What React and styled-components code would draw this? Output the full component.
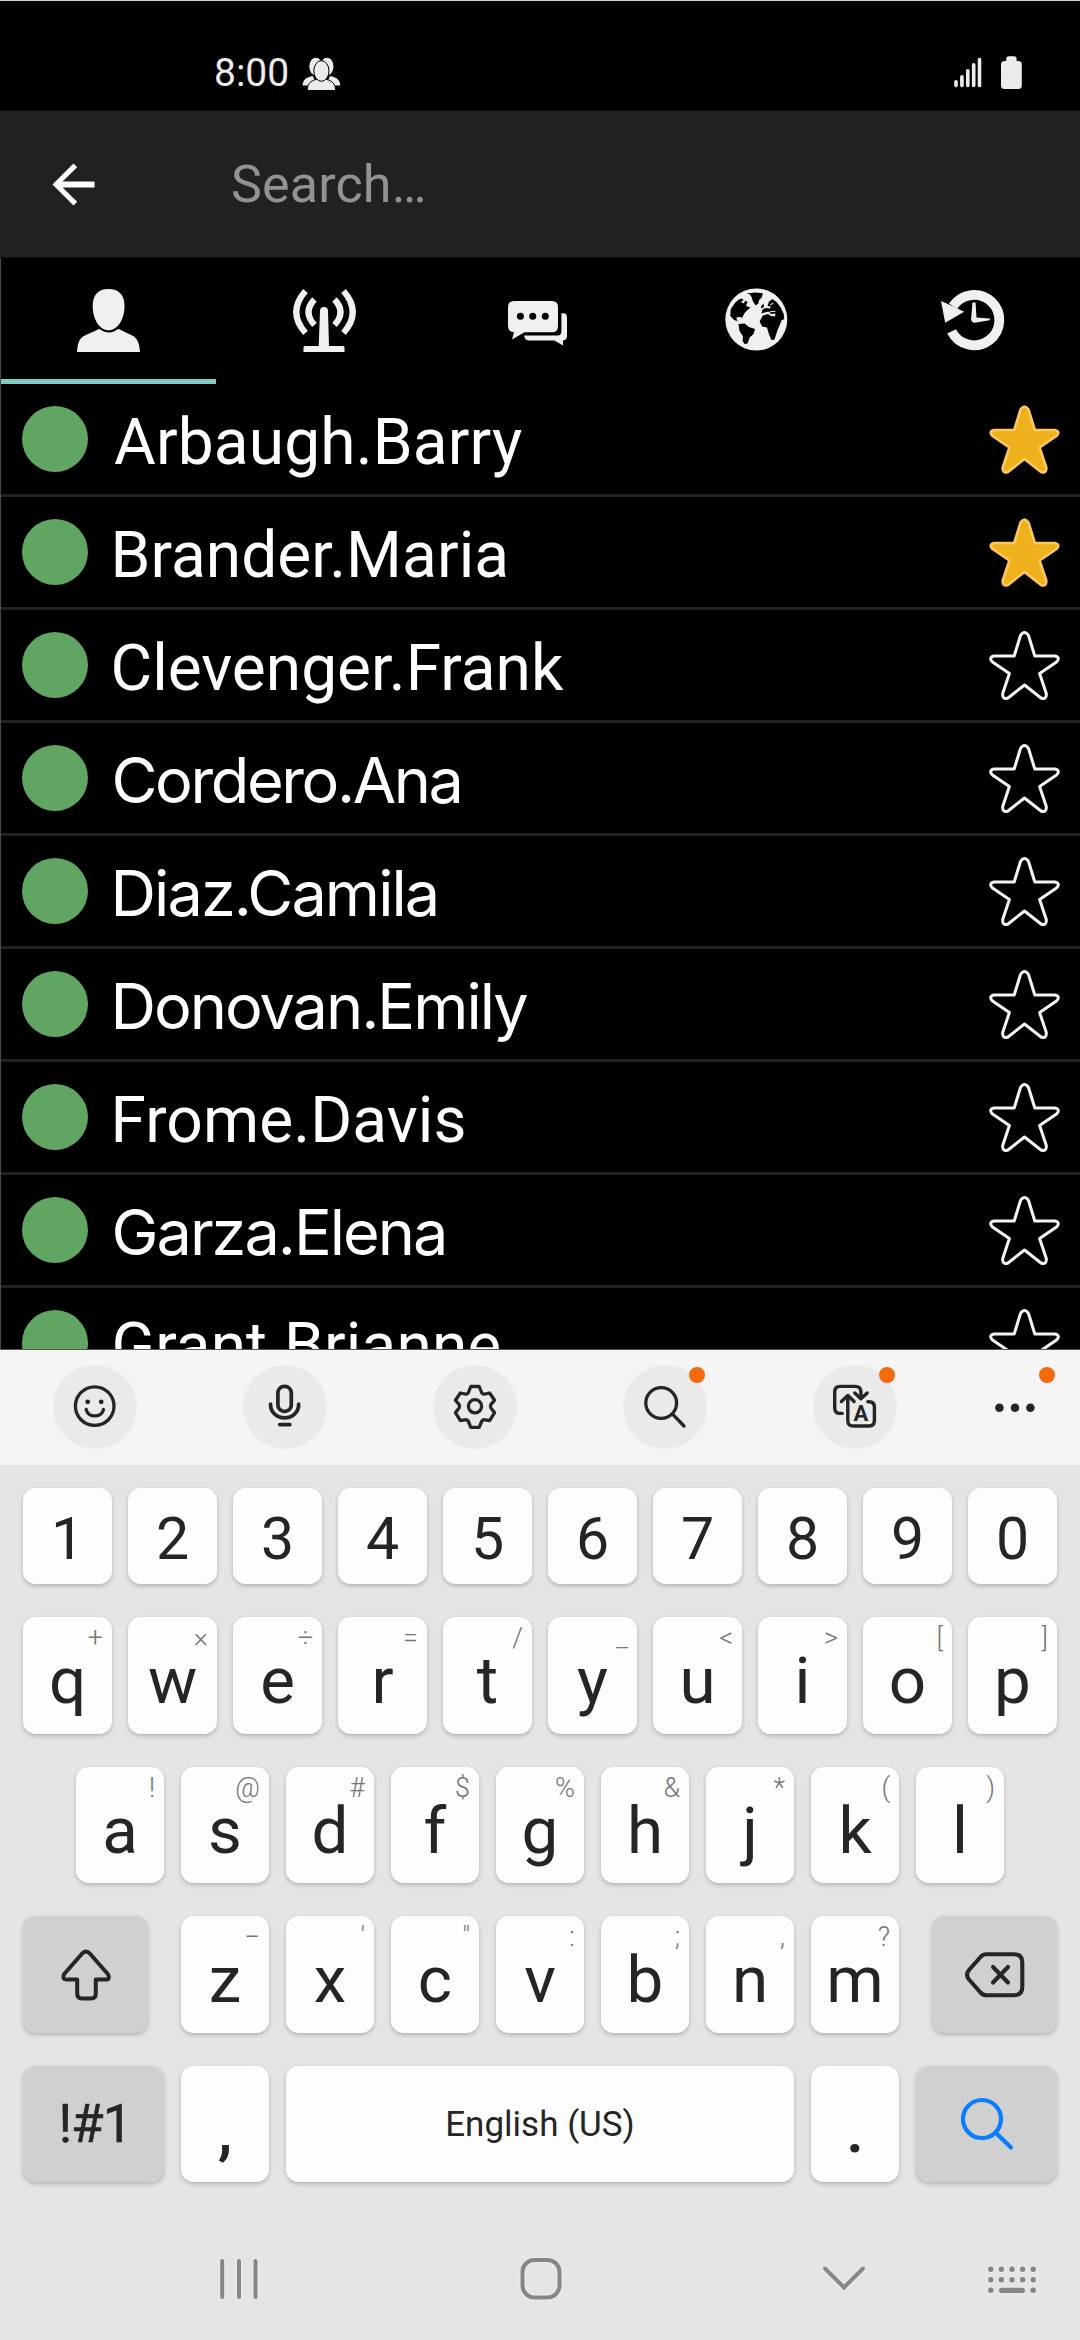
import styled, { createGlobalStyle, css } from "styled-components";

const GlobalStyle = createGlobalStyle`
  * {
    box-sizing: border-box;
  }

  body {
    margin: 0;
    background: #000;
    font-family: Roboto, "Liberation Sans", sans-serif;
  }

  svg {
    display: block;
    flex: none;
    overflow: visible;
  }
`;

const Screen = styled.div`
  width: 1080px;
  height: 2340px;
  display: flex;
  flex-direction: column;
  overflow: hidden;
  background: #000;
`;

const StatusBar = styled.div`
  height: 110px;
  display: flex;
  align-items: flex-start;
  padding: 50px 58px 0 214px;
  border-top: 1px solid #cfd1d0;
  color: #ebebeb;
`;

const Clock = styled.span`
  font-size: 39px;
  line-height: 44px;
  margin-right: 12.5px;
`;

const StatusIcons = styled.div`
  display: flex;
  gap: 19px;
  margin-left: auto;
  padding-top: 5px;
`;

const StatusGroup = styled.div`
  padding-top: 6px;
`;

const AppBar = styled.header`
  height: 148px;
  display: flex;
  align-items: center;
  padding: 0 42px;
  background: #212121;
  border-top: 1px solid #111;
  border-bottom: 1px solid #111;
`;

const SearchHint = styled.div`
  margin-left: 126px;
  padding-top: 2px;
  font-size: 52px;
  line-height: 60px;
  letter-spacing: 0.15px;
  color: #929292;
`;

const Body = styled.div`
  height: 1092px;
  overflow: hidden;
  border-left: 1px solid #4a4a4a;
  border-bottom: 1px solid #555;
`;

const Tabs = styled.nav`
  height: 126px;
  display: grid;
  grid-template-columns: repeat(5, 216px);
  margin-left: -1px;
`;

const Tab = styled.div`
  display: flex;
  align-items: center;
  justify-content: center;
  padding-top: ${({ $drop }) => $drop || 3}px;
  color: #f1eff0;
  border-bottom: 5px solid ${({ $active }) => ($active ? "#80cbc4" : "transparent")};
`;

const ContactRow = styled.div`
  height: 113px;
  display: flex;
  align-items: center;
  padding: 0 20.5px 0 21px;
  border-bottom: 3px solid #212121;
`;

const Presence = styled.span`
  width: 66px;
  height: 66px;
  border-radius: 50%;
  background: #60a561;
`;

const Name = styled.span`
  margin-right: auto;
  padding-top: 7px;
  padding-left: ${({ $indent }) => $indent}px;
  font-size: 64px;
  line-height: 102px;
  color: #fff;
  white-space: nowrap;
  letter-spacing: ${({ $spacing }) => $spacing || 0}px;

  ${({ $wide }) =>
    $wide &&
    css`
      padding-top: 3px;
      font-family: Inter, Roboto, sans-serif;
      font-size: 63px;
    `}
`;

const Toolbar = styled.div`
  height: 115px;
  display: flex;
  padding: 15px 23px 0 53px;
  gap: 106px;
  background: #f5f5f5;
`;

const ToolButton = styled.div`
  position: relative;
  width: 84px;
  height: 84px;
  display: flex;
  align-items: center;
  justify-content: center;
  border-radius: 50%;
  background: ${({ $plain }) => ($plain ? "transparent" : "#eaeaea")};
  margin-left: ${({ $plain }) => ($plain ? "-30px" : "0")};
  color: #252525;
`;

const Badge = styled.span`
  position: absolute;
  top: 1.5px;
  right: 2px;
  width: 16px;
  height: 16px;
  border-radius: 50%;
  background: #f66a0b;
`;

const Keyboard = styled.div`
  height: 753px;
  display: flex;
  flex-direction: column;
  gap: 33px;
  padding: 23px 23px 0;
  background: #e5e5e5;
`;

const KeyRow = styled.div`
  display: flex;
  justify-content: space-between;
  height: ${({ $height }) => $height}px;
  padding: 0 ${({ $inset }) => $inset || 0}px;
`;

const LetterGroup = styled.div`
  display: flex;
  gap: 17px;
`;

const Key = styled.div`
  width: ${({ $width }) => $width || 88}px;
  display: flex;
  flex-direction: column;
  align-items: center;
  justify-content: ${({ $center }) => ($center ? "center" : "flex-start")};
  border-radius: 12.5px;
  background: ${({ $dark }) => ($dark ? "#d0d0d0" : "#fdfdfd")};
  box-shadow: 0 2px 4px rgba(0, 0, 0, 0.22);
  color: #252525;
`;

const Digit = styled.span`
  padding-top: 5px;
  font-size: 59px;
  line-height: 60px;
`;

const KeyHint = styled.span`
  align-self: flex-end;
  height: 30px;
  margin-top: 7px;
  padding-right: 9px;
  font-size: 27px;
  font-weight: 300;
  line-height: 29px;
  color: #757575;
`;

const Letter = styled.span`
  font-size: 65.5px;
  font-weight: ${({ $heavy }) => ($heavy ? 500 : 400)};
  line-height: 54px;
`;

const SymbolLabel = styled.span`
  padding-left: 3px;
  font-size: 53px;
  line-height: 60px;
  letter-spacing: -1px;
  -webkit-text-stroke: 0.5px currentColor;
`;

const SpaceLabel = styled.span`
  padding-top: 2px;
  font-size: 35px;
  line-height: 40px;
`;

const NavBar = styled.footer`
  height: 122px;
  display: flex;
  align-items: center;
  padding-left: 219px;
  background: #e5e5e5;
  color: #868686;
`;

const NavItem = styled.div`
  margin-right: ${({ $gap }) => $gap || 0}px;
  filter: drop-shadow(0 0 1px rgba(255, 255, 255, 0.6));
`;

const contacts = [
  { name: "Arbaugh.Barry", favorite: true, indent: 26, spacing: 0.15 },
  { name: "Brander.Maria", favorite: true, indent: 22.5, spacing: 0.05 },
  { name: "Clevenger.Frank", indent: 22.5 },
  { name: "Cordero.Ana", indent: 23.5, spacing: -2.4, wide: true },
  { name: "Diaz.Camila", indent: 22.5, spacing: -1.9, wide: true },
  { name: "Donovan.Emily", indent: 22.5, spacing: -2, wide: true },
  { name: "Frome.Davis", indent: 22.5, spacing: 0.1 },
  { name: "Garza.Elena", indent: 23.5, spacing: -2, wide: true },
  { name: "Grant.Brianne", indent: 23.5, spacing: 0.1 },
];

const digits = ["1", "2", "3", "4", "5", "6", "7", "8", "9", "0"];

const topRow = [
  ["q", "+"],
  ["w", "×"],
  ["e", "÷"],
  ["r", "="],
  ["t", "/"],
  ["y", "_"],
  ["u", "<"],
  ["i", ">"],
  ["o", "["],
  ["p", "]"],
];

const homeRow = [
  ["a", "!"],
  ["s", "@"],
  ["d", "#"],
  ["f", "$"],
  ["g", "%"],
  ["h", "&"],
  ["j", "*"],
  ["k", "("],
  ["l", ")"],
];

const bottomRow = [
  ["z", "−"],
  ["x", "'"],
  ["c", '"'],
  ["v", ":"],
  ["b", ";"],
  ["n", ","],
  ["m", "?"],
];

const GroupIcon = () => (
  <svg width="39" height="34" viewBox="0 0 39 34" fill="currentColor" stroke="#000" strokeWidth="1">
    <ellipse cx="13.8" cy="9.5" rx="7" ry="9.3" />
    <ellipse cx="25" cy="9.5" rx="7" ry="9.3" />
    <path d="M0 29C0 23 4 19.5 11 18.5L16 29Z" />
    <path d="M38.8 29C38.8 23 34.8 19.5 27.8 18.5L22.8 29Z" />
    <path d="M5.2 33.5C5.5 26.5 8.5 24 14.5 22.3H24.3C30.3 24 33.3 26.5 33.6 33.5Z" />
    <ellipse cx="19.4" cy="14" rx="7.6" ry="10.3" />
  </svg>
);

const SignalIcon = () => (
  <svg width="28" height="32" viewBox="0 0 28 32" stroke="currentColor" strokeWidth="3.6" strokeLinecap="round">
    <path d="M2 25.8V29.5M7.9 20.8V29.5M13.8 14.8V29.5M19.7 8.8V29.5M25.5 3.5V29.5" />
  </svg>
);

const BatteryIcon = () => (
  <svg width="21" height="33" viewBox="0 0 21 33" fill="currentColor">
    <rect x="5.2" y="0.3" width="10.4" height="10" rx="2.5" />
    <rect x="0" y="5" width="20.8" height="28" rx="3.5" />
  </svg>
);

const BackIcon = () => (
  <svg width="63" height="63" viewBox="0 0 24 24" fill="#fff">
    <path d="M20 10.9H7.83l5.59-5.49L12 4l-8 8 8 8 1.41-1.41L7.83 13.1H20z" />
  </svg>
);

const PersonIcon = () => (
  <svg width="63" height="63" viewBox="0 0 63 63" fill="currentColor">
    <path d="M31.5 0C42 0 47.5 6 47.5 17C47.5 31 40 41.3 31.5 41.3C23 41.3 15.7 31 15.7 17C15.7 6 21 0 31.5 0Z" />
    <path d="M0 63C.5 55 2 50.5 6 47.5C11 44.5 18 42.5 21.5 40L23.5 40.5C28 44.5 36 44.5 40 40.5L42 40C47 43 53 45 57 47.5C61.5 51 62.5 57 63 63Z" />
  </svg>
);

const AntennaIcon = () => (
  <svg width="63" height="63" viewBox="0 0 63 63" fill="none" stroke="currentColor" strokeWidth="6.2">
    <path d="M12.5 2Q-6 23 12.5 44M21.5 10.5Q9.5 23 21.5 36" />
    <path d="M50.5 2Q69 23 50.5 44M41.5 10.5Q53.5 23 41.5 36" />
    <path
      d="M25.7 57L27 22Q27 18 31 18Q35 18 35 22L36 57H50Q51.5 57 51.5 58.5V63H10.5V58.5Q10.5 57 12 57Z"
      fill="currentColor"
      stroke="none"
    />
  </svg>
);

const ChatIcon = () => (
  <svg width="64" height="46" viewBox="0 0 64 46" fill="currentColor">
    <path d="M6 0H44Q50 0 50 6V25Q50 31.3 44 31.3H16.5L4 38.5L6 31.3Q0 31 0 25V6Q0 0 6 0Z" />
    <path d="M53.4 12.3H55.5Q59 12.5 59 16.5V35Q59 39 55 39.5V44.5L46.5 39.5H21Q17 39.5 16 34.5H49.5Q53.4 34.5 53.4 30.5Z" />
    <g fill="#000">
      <circle cx="12.4" cy="15.2" r="3.5" />
      <circle cx="24.7" cy="15.2" r="3.5" />
      <circle cx="37.3" cy="15.2" r="3.5" />
    </g>
  </svg>
);

const GlobeIcon = () => (
  <svg width="63" height="62" viewBox="0 0 63 62">
    <circle cx="31.3" cy="30.5" r="31" fill="currentColor" />
    <g fill="#000">
      <path d="M21.7 4.5L30 3.4L37.8 4.2L36.8 8.5L34 11L33.4 14.5L30.5 16.5L27.8 12L26.5 8L25 5.5Z" />
      <path d="M17 9.5L18.5 11L16 13L18.5 14.5L20.5 11.5L22.5 13L21 17L25.5 18.5L22 21.5L19.6 24L17 29L15.5 28L11.4 28.3L12 31.5L15 33L9 31L5.2 26.7L5.8 20L10.5 13.3L14 10.5Z" />
      <path d="M13.4 35L19.6 34.5L24 38L30 40L28.6 45L24.8 48.3L22.5 54.5L19.5 55L17.6 52L18 47.5L14.5 42Z" />
      <path d="M47.5 10L52 13.5L56 19L58.7 25L59.2 30L56.5 31.5L54.8 36L52.3 41.7L49.5 50.5L46.5 51L44.2 46L42 38.5L37.2 37.5L34.6 32.5L37.8 26.5L43 25L46 27L50 27.5L50.5 24.5L46 25L44 22.5L39.5 23.5L36.5 24.5L37.5 20.5L41 19L45 19.5L46 17.5L42.5 17L44 12.5Z" />
      <path d="M36 17.5L38.5 14.5L39 18L36.5 19.5Z" />
    </g>
    <path d="M45 15.5L48.5 14.5M45 22.8L50.5 22.2" stroke="currentColor" strokeWidth="1" />
  </svg>
);

const HistoryIcon = () => (
  <svg width="63" height="60" viewBox="0 0 63 60" fill="none" stroke="currentColor">
    <path d="M10.6 41.4A25.2 25.2 0 1 0 12 16.3" strokeWidth="9.8" />
    <path d="M0 11L9 15L23.2 21.8L4.2 32.8Z" fill="currentColor" stroke="none" />
    <path d="M31.4 12.5H34.6L35.5 27.5L48.8 28.6V30.2L35 32.5A3.8 3.8 0 0 1 30.3 27.5Z" fill="currentColor" stroke="none" />
  </svg>
);

const StarIcon = ({ filled }) => (
  <svg
    width="71"
    height="69"
    viewBox="0 0 71 69"
    fill={filled ? "#eeb11e" : "none"}
    stroke={filled ? "#fcc75f" : "#f4f4f4"}
    strokeWidth={filled ? 2.6 : 3}
    strokeLinejoin="round"
  >
    <path d="M31.5 4.5Q35.5 -1.5 39.5 4.5L45.8 25L66 25Q71.8 26.5 67.5 31L50.6 42.5L57.3 62.5Q57.8 69 52 67L35.5 54L19 67Q13.2 69 13.7 62.5L20.4 42.5L3.5 31Q-.8 26.5 5 25L25.2 25Z" />
  </svg>
);

// Keyboard glyphs are all drawn around the origin
const KeyGlyph = ({ size = 60, stroke = 3.3, children }) => (
  <svg
    width={size}
    height={size}
    viewBox={`${-size / 2} ${-size / 2} ${size} ${size}`}
    fill="none"
    stroke="currentColor"
    strokeWidth={stroke}
    strokeLinecap="round"
    strokeLinejoin="round"
  >
    {children}
  </svg>
);

const SmileIcon = () => (
  <KeyGlyph>
    <circle cx="-0.3" cy="-0.9" r="19.3" />
    <path d="M-8.8 2.5C-7.5 11 7 11 8.5 2.5" />
    <circle cx="-7.3" cy="-5.2" r="2.4" fill="currentColor" stroke="none" />
    <circle cx="6.2" cy="-5.2" r="2.4" fill="currentColor" stroke="none" />
  </KeyGlyph>
);

const MicIcon = () => (
  <KeyGlyph stroke={3.7}>
    <rect x="-7.1" y="-20.6" width="13.4" height="25" rx="6.5" />
    <path d="M-14.5 -3C-14.5 15.5 13.7 15.5 13.7 -3M-5.3 17.6H4.8" />
  </KeyGlyph>
);

const GearIcon = () => (
  <KeyGlyph>
    <path d="M-4.2 -20.5H4.2L6.8 -14Q8 -12.5 10 -13L14.6 -14L19.6 -6.8L16 -2.6Q14.8 -.7 16 1.2L19.6 5.6L14.6 13.6L10 12.8Q8 12.5 6.8 14L4.2 20.3H-4.2L-6.8 14Q-8 12.5 -10 12.8L-14.6 13.6L-19.6 5.6L-16 1.2Q-14.8 -.7 -16 -2.6L-19.6 -6.8L-14.6 -14L-10 -13Q-8 -12.5 -6.8 -14Z" />
    <circle cx="0" cy="-0.7" r="6.6" />
  </KeyGlyph>
);

const SearchIcon = () => (
  <KeyGlyph>
    <circle cx="-3.8" cy="-4" r="15.4" />
    <path d="M7.8 7.3L19 19" />
  </KeyGlyph>
);

const TranslateIcon = () => (
  <KeyGlyph stroke={3.4}>
    <path d="M-12.8 6.4H-15Q-20.3 6.4 -20.3 1V-15Q-20.3 -20.6 -15 -20.6H0Q5.9 -20.6 5.9 -15V-9" />
    <path d="M-.2 -14L5.9 -8.3L12.2 -14" />
    <path d="M12.8 -5.3H14Q19.4 -5.3 19.4 0V13.5Q19.4 19 14 19H-1.5Q-7.2 19 -7.2 13.5V-11" />
    <path d="M-13.6 -5.5L-7.2 -11.5L-.9 -5.5" />
    <text
      x="6"
      y="14.3"
      textAnchor="middle"
      fontFamily="Roboto, sans-serif"
      fontSize="22"
      fontWeight="700"
      fill="currentColor"
      stroke="none"
    >
      A
    </text>
  </KeyGlyph>
);

const MoreIcon = () => (
  <KeyGlyph>
    <g fill="currentColor" stroke="none">
      <circle cx="-15.6" cy="0.7" r="4.3" />
      <circle cx="0" cy="0.7" r="4.3" />
      <circle cx="15.4" cy="0.7" r="4.3" />
    </g>
  </KeyGlyph>
);

const ShiftIcon = () => (
  <KeyGlyph stroke={4}>
    <path d="M-4 -21.3Q0 -25.6 4 -21.3L21.8 -1Q24.8 4.6 19.5 4.6H9.8V18.5Q9.8 23.4 5 23.4H-4Q-8.8 23.4 -8.8 18.5V4.6H-19Q-24.6 4.6 -21.8 -1Z" />
  </KeyGlyph>
);

const BackspaceIcon = () => (
  <KeyGlyph stroke={4.1}>
    <path d="M-9 -20.7H19Q27.3 -20.7 27.3 -12.5V12Q27.3 20.2 19 20.2H-9Q-12 20.2 -14.5 17.5L-26 4.5Q-29.8 0 -26 -5L-14.5 -18Q-12 -20.7 -9 -20.7Z" />
    <path d="M-2 -8L13 7.5M13 -8L-2 7.5" />
  </KeyGlyph>
);

const ConfirmSearchIcon = () => (
  <KeyGlyph stroke={4.2}>
    <g stroke="#0a7cff">
      <circle cx="-5" cy="-5" r="19" />
      <path d="M9.8 9.7L24 23.5" />
    </g>
  </KeyGlyph>
);

const LetterKey = ({ letter, hint, width }) => (
  <Key $width={width}>
    <KeyHint>{hint}</KeyHint>
    <Letter>{letter}</Letter>
  </Key>
);

const PunctuationKey = ({ children }) => (
  <Key>
    <KeyHint />
    <Letter $heavy>{children}</Letter>
  </Key>
);

export default function App() {
  return (
    <Screen>
      <GlobalStyle />

      <StatusBar>
        <Clock>8:00</Clock>
        <StatusGroup>
          <GroupIcon />
        </StatusGroup>
        <StatusIcons>
          <SignalIcon />
          <BatteryIcon />
        </StatusIcons>
      </StatusBar>

      <AppBar>
        <BackIcon />
        <SearchHint>Search…</SearchHint>
      </AppBar>

      <Body>
        <Tabs>
          <Tab $active>
            <PersonIcon />
          </Tab>
          <Tab>
            <AntennaIcon />
          </Tab>
          <Tab $drop={11}>
            <ChatIcon />
          </Tab>
          <Tab>
            <GlobeIcon />
          </Tab>
          <Tab>
            <HistoryIcon />
          </Tab>
        </Tabs>

        {contacts.map(({ name, favorite, indent, spacing, wide }) => (
          <ContactRow key={name}>
            <Presence />
            <Name $indent={indent} $spacing={spacing} $wide={wide}>
              {name}
            </Name>
            <StarIcon filled={favorite} />
          </ContactRow>
        ))}
      </Body>

      <Toolbar>
        <ToolButton>
          <SmileIcon />
        </ToolButton>
        <ToolButton>
          <MicIcon />
        </ToolButton>
        <ToolButton>
          <GearIcon />
        </ToolButton>
        <ToolButton>
          <SearchIcon />
          <Badge />
        </ToolButton>
        <ToolButton>
          <TranslateIcon />
          <Badge />
        </ToolButton>
        <ToolButton $plain>
          <MoreIcon />
          <Badge />
        </ToolButton>
      </Toolbar>

      <Keyboard>
        <KeyRow $height={96}>
          {digits.map((digit) => (
            <Key key={digit} $width={89} $center>
              <Digit>{digit}</Digit>
            </Key>
          ))}
        </KeyRow>

        <KeyRow $height={117}>
          {topRow.map(([letter, hint]) => (
            <LetterKey key={letter} letter={letter} hint={hint} width={89} />
          ))}
        </KeyRow>

        <KeyRow $height={116} $inset={53}>
          {homeRow.map(([letter, hint]) => (
            <LetterKey key={letter} letter={letter} hint={hint} />
          ))}
        </KeyRow>

        <KeyRow $height={117}>
          <Key $width={125} $dark $center>
            <ShiftIcon />
          </Key>
          <LetterGroup>
            {bottomRow.map(([letter, hint]) => (
              <LetterKey key={letter} letter={letter} hint={hint} />
            ))}
          </LetterGroup>
          <Key $width={125} $dark $center>
            <BackspaceIcon />
          </Key>
        </KeyRow>

        <KeyRow $height={116}>
          <Key $width={141} $dark $center>
            <SymbolLabel>!#1</SymbolLabel>
          </Key>
          <PunctuationKey>,</PunctuationKey>
          <Key $width={508} $center>
            <SpaceLabel>English (US)</SpaceLabel>
          </Key>
          <PunctuationKey>.</PunctuationKey>
          <Key $width={141} $dark $center>
            <ConfirmSearchIcon />
          </Key>
        </KeyRow>
      </Keyboard>

      <NavBar>
        <NavItem $gap={260}>
          <svg width="40" height="44" viewBox="0 0 40 44" stroke="currentColor" strokeWidth="4" strokeLinecap="round">
            <path d="M3.2 4V40M20 4V40M36.5 4V40" />
          </svg>
        </NavItem>
        <NavItem $gap={259}>
          <svg width="44" height="44" viewBox="0 0 44 44" fill="none" stroke="currentColor" strokeWidth="4">
            <rect x="3.5" y="3" width="37" height="37.5" rx="12" />
          </svg>
        </NavItem>
        <NavItem $gap={121}>
          <svg width="44" height="44" viewBox="0 0 44 44" fill="none" stroke="currentColor" strokeWidth="4" strokeLinecap="round">
            <path d="M3 11.5L22 30.5L41 11.5" />
          </svg>
        </NavItem>
        <NavItem>
          <svg width="50" height="44" viewBox="0 0 50 44" fill="currentColor">
            {[0, 1, 2, 3, 4].map((col) => (
              <g key={col}>
                <circle cx={3.8 + col * 10.6} cy="12.3" r="2.7" />
                <circle cx={3.8 + col * 10.6} cy="22.7" r="2.7" />
              </g>
            ))}
            <circle cx="3.8" cy="33.3" r="2.7" />
            <rect x="12" y="30.7" width="26" height="5.2" rx="2.6" />
            <circle cx="46.2" cy="33.3" r="2.7" />
          </svg>
        </NavItem>
      </NavBar>
    </Screen>
  );
}
